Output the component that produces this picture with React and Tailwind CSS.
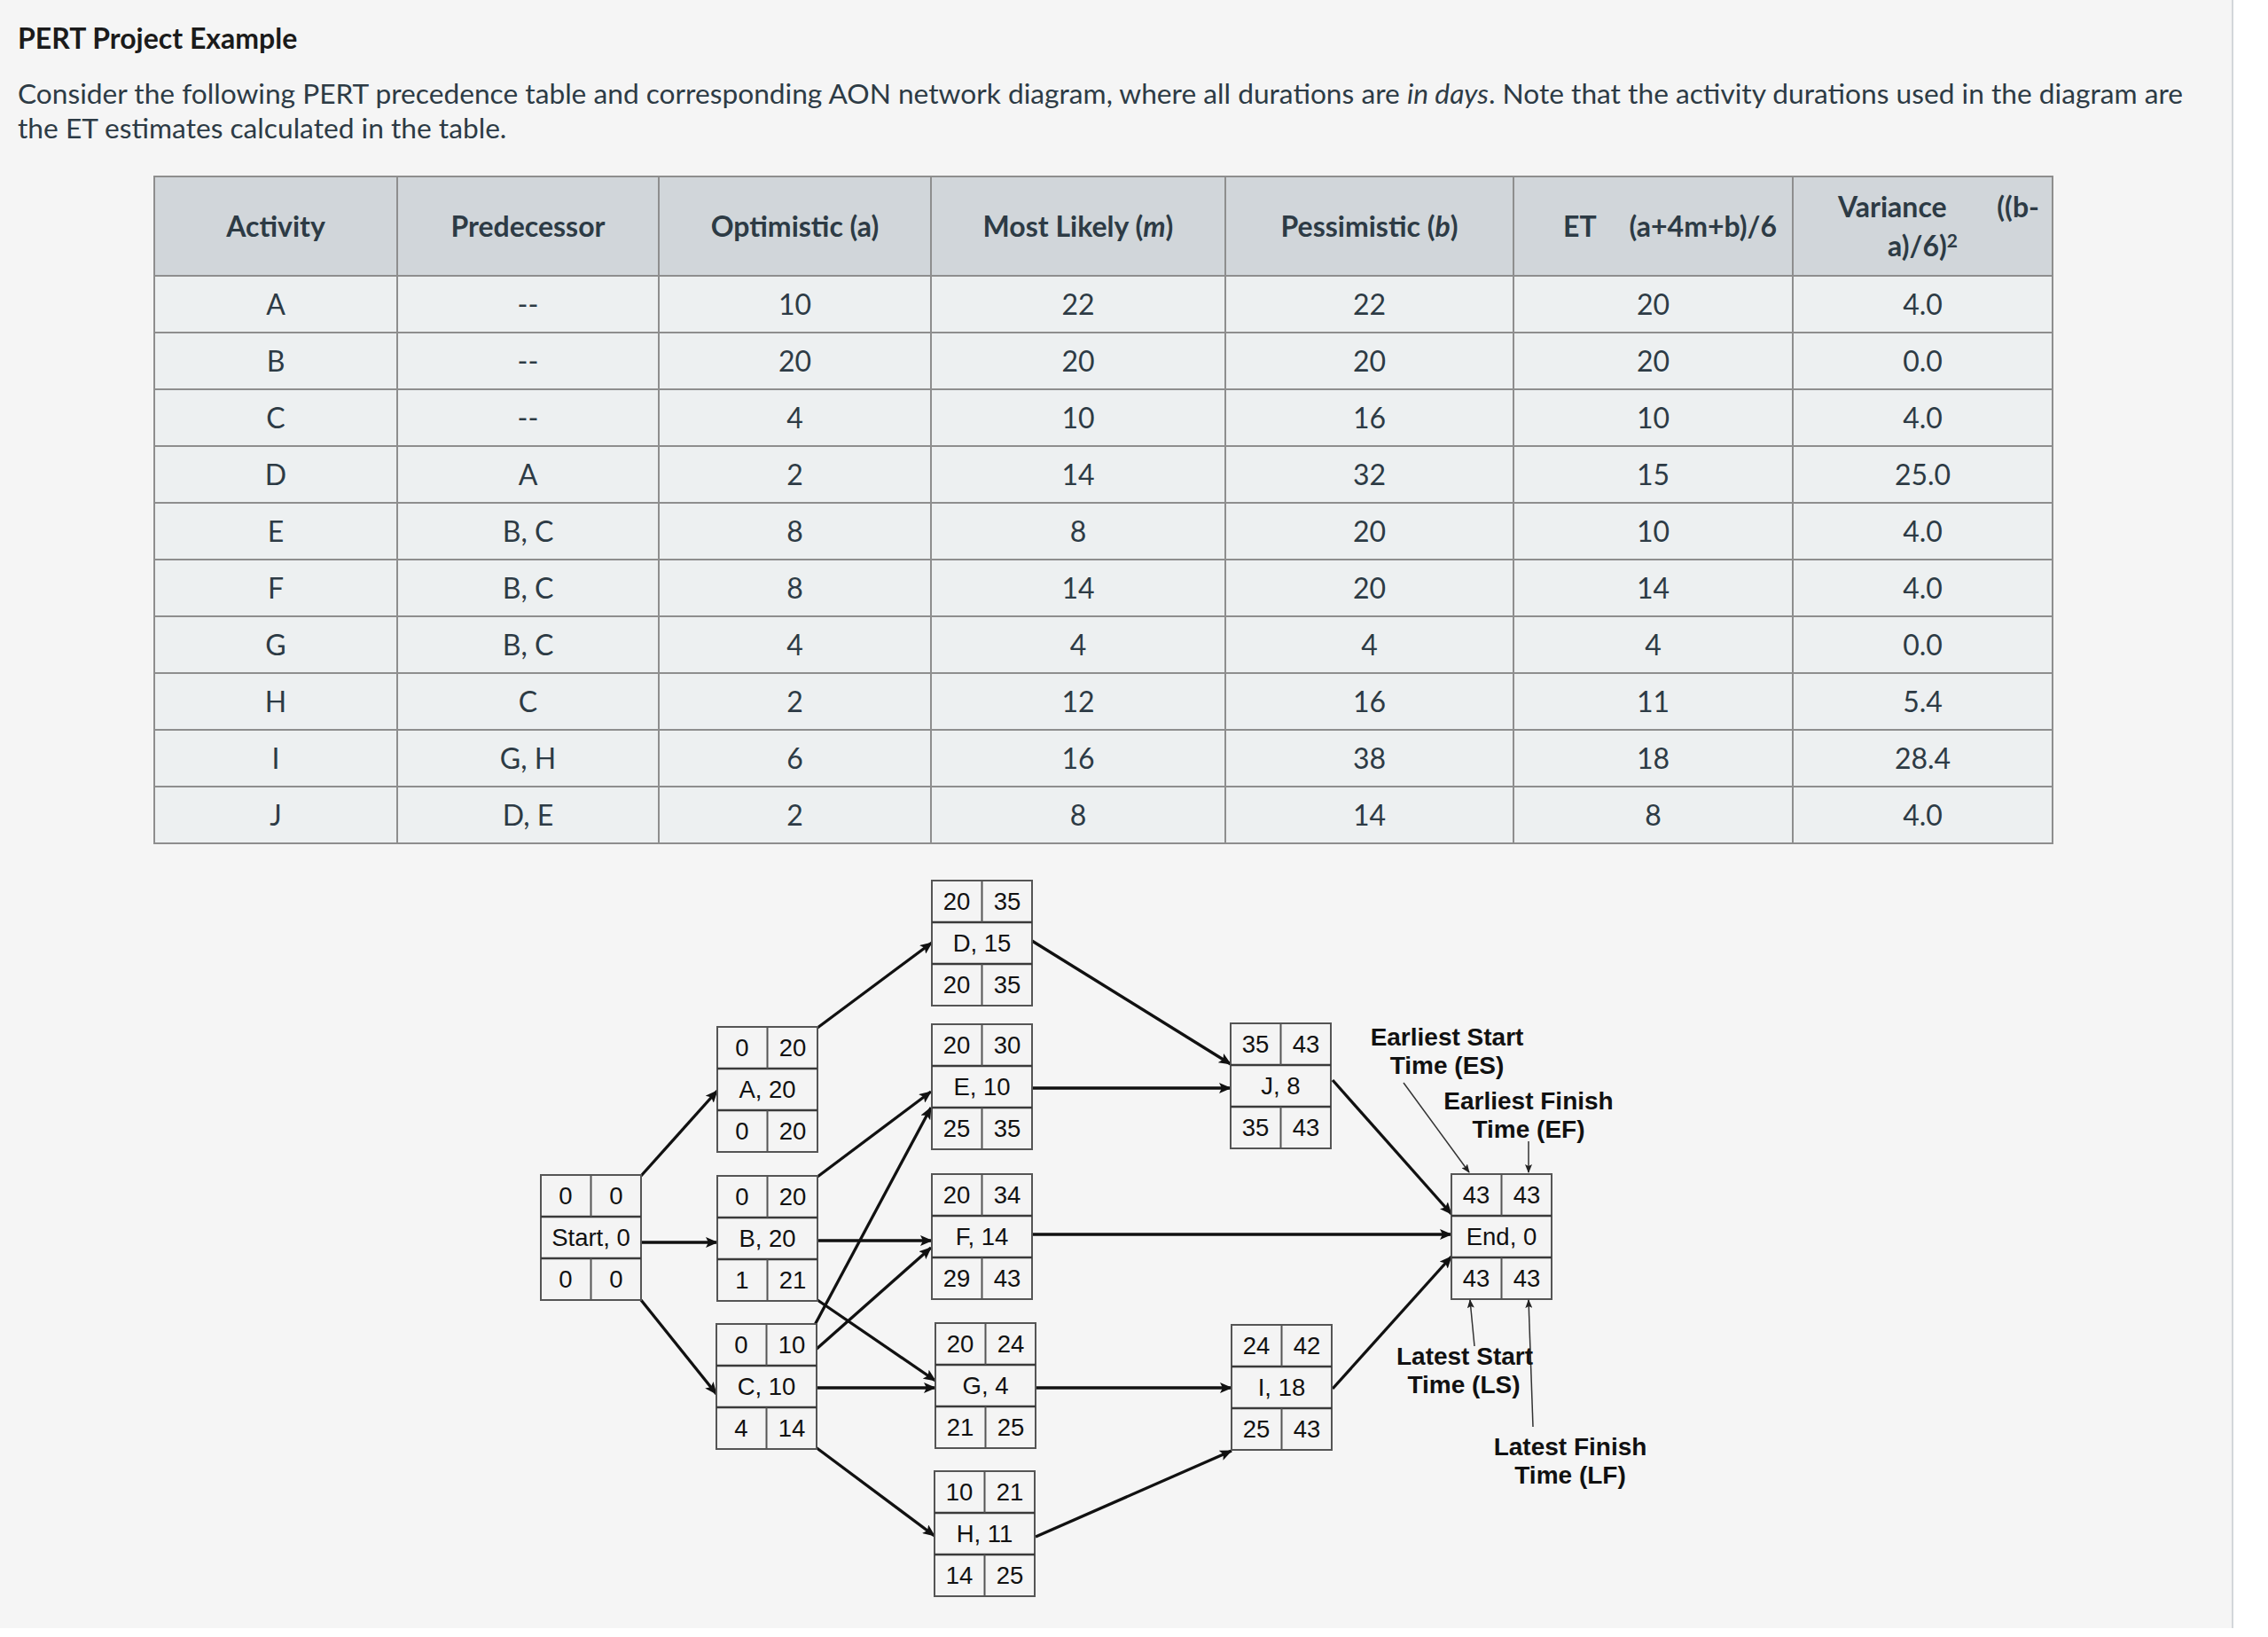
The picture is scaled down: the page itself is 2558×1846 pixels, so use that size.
import React from 'react';

const rows = [
  ['A', '--', '10', '22', '22', '20', '4.0'],
  ['B', '--', '20', '20', '20', '20', '0.0'],
  ['C', '--', '4', '10', '16', '10', '4.0'],
  ['D', 'A', '2', '14', '32', '15', '25.0'],
  ['E', 'B, C', '8', '8', '20', '10', '4.0'],
  ['F', 'B, C', '8', '14', '20', '14', '4.0'],
  ['G', 'B, C', '4', '4', '4', '4', '0.0'],
  ['H', 'C', '2', '12', '16', '11', '5.4'],
  ['I', 'G, H', '6', '16', '38', '18', '28.4'],
  ['J', 'D, E', '2', '8', '14', '8', '4.0'],
];

const colWidths = ['w-[274px]', 'w-[295px]', 'w-[307px]', 'w-[332px]', 'w-[325px]', 'w-[315px]', 'w-[293px]'];

// nodes of the AON diagram: top-left corner in page coordinates
const nodes = [
  { x: 610, y: 1326, es: '0', ef: '0', label: 'Start, 0', ls: '0', lf: '0' },
  { x: 809, y: 1159, es: '0', ef: '20', label: 'A, 20', ls: '0', lf: '20' },
  { x: 809, y: 1327, es: '0', ef: '20', label: 'B, 20', ls: '1', lf: '21' },
  { x: 808, y: 1494, es: '0', ef: '10', label: 'C, 10', ls: '4', lf: '14' },
  { x: 1051, y: 994, es: '20', ef: '35', label: 'D, 15', ls: '20', lf: '35' },
  { x: 1051, y: 1156, es: '20', ef: '30', label: 'E, 10', ls: '25', lf: '35' },
  { x: 1051, y: 1325, es: '20', ef: '34', label: 'F, 14', ls: '29', lf: '43' },
  { x: 1055, y: 1493, es: '20', ef: '24', label: 'G, 4', ls: '21', lf: '25' },
  { x: 1054, y: 1660, es: '10', ef: '21', label: 'H, 11', ls: '14', lf: '25' },
  { x: 1388, y: 1155, es: '35', ef: '43', label: 'J, 8', ls: '35', lf: '43' },
  { x: 1389, y: 1495, es: '24', ef: '42', label: 'I, 18', ls: '25', lf: '43' },
  { x: 1637, y: 1325, es: '43', ef: '43', label: 'End, 0', ls: '43', lf: '43' },
];

const arrows = [
  [723, 1327, 809, 1231],
  [723, 1402, 809, 1402],
  [723, 1467, 808, 1573],
  [922, 1160, 1051, 1064],
  [922, 1328, 1050, 1232],
  [919, 1495, 1050, 1250],
  [922, 1400, 1051, 1400],
  [920, 1523, 1050, 1408],
  [922, 1467, 1055, 1558],
  [920, 1566, 1055, 1566],
  [920, 1633, 1054, 1733],
  [1164, 1062, 1388, 1201],
  [1163, 1228, 1388, 1228],
  [1163, 1393, 1637, 1393],
  [1168, 1566, 1389, 1566],
  [1168, 1734, 1389, 1637],
  [1503, 1219, 1637, 1370],
  [1503, 1567, 1637, 1418],
];

const pointers = [
  [1583, 1222, 1657, 1323],
  [1724, 1288, 1724, 1323],
  [1663, 1519, 1658, 1467],
  [1729, 1610, 1724, 1467],
];

const labels = [
  ['Earliest Start', 1632, 1180],
  ['Time (ES)', 1632, 1212],
  ['Earliest Finish', 1724, 1252],
  ['Time (EF)', 1724, 1284],
  ['Latest Start', 1652, 1540],
  ['Time (LS)', 1651, 1572],
  ['Latest Finish', 1771, 1642],
  ['Time (LF)', 1771, 1674],
];

const Node = ({ n }) => {
  const w = 113;
  const r = 47;
  return (
    <g>
      <rect x={n.x} y={n.y} width={w} height={r * 3} fill="#f4f4f4" stroke="#555" strokeWidth="2" />
      <line x1={n.x} y1={n.y + r} x2={n.x + w} y2={n.y + r} stroke="#3a3a3a" strokeWidth="2.5" />
      <line x1={n.x} y1={n.y + r * 2} x2={n.x + w} y2={n.y + r * 2} stroke="#3a3a3a" strokeWidth="2.5" />
      <line x1={n.x + w / 2} y1={n.y} x2={n.x + w / 2} y2={n.y + r} stroke="#555" strokeWidth="2" />
      <line x1={n.x + w / 2} y1={n.y + r * 2} x2={n.x + w / 2} y2={n.y + r * 3} stroke="#555" strokeWidth="2" />
      <text x={n.x + 28} y={n.y + 33} textAnchor="middle">{n.es}</text>
      <text x={n.x + 85} y={n.y + 33} textAnchor="middle">{n.ef}</text>
      <text x={n.x + w / 2} y={n.y + r + 33} textAnchor="middle">{n.label}</text>
      <text x={n.x + 28} y={n.y + r * 2 + 33} textAnchor="middle">{n.ls}</text>
      <text x={n.x + 85} y={n.y + r * 2 + 33} textAnchor="middle">{n.lf}</text>
    </g>
  );
};

const Diagram = () => (
  <svg
    width="1300"
    height="860"
    viewBox="580 960 1300 860"
    className="block ml-[560px] mt-[7px]"
    fontFamily="'Liberation Sans', Arial, sans-serif"
    fontSize="27.5"
    fill="#111"
  >
    <defs>
      <marker id="head" markerUnits="userSpaceOnUse" markerWidth="14" markerHeight="12" refX="13" refY="6" orient="auto">
        <path d="M0,0 L14,6 L0,12 L3,6 Z" fill="#111" />
      </marker>
      <marker id="tip" markerUnits="userSpaceOnUse" markerWidth="10" markerHeight="8" refX="9" refY="4" orient="auto">
        <path d="M0,0 L10,4 L0,8 L2,4 Z" fill="#222" />
      </marker>
    </defs>
    {arrows.map(([x1, y1, x2, y2], i) => (
      <line key={i} x1={x1} y1={y1} x2={x2} y2={y2} stroke="#111" strokeWidth="3.3" markerEnd="url(#head)" />
    ))}
    {nodes.map((n, i) => (
      <Node key={i} n={n} />
    ))}
    {pointers.map(([x1, y1, x2, y2], i) => (
      <line key={i} x1={x1} y1={y1} x2={x2} y2={y2} stroke="#333" strokeWidth="1.5" markerEnd="url(#tip)" />
    ))}
    {labels.map(([t, x, y], i) => (
      <text key={i} x={x} y={y} textAnchor="middle" fontWeight="bold" fontSize="28">
        {t}
      </text>
    ))}
  </svg>
);

export default function App() {
  return (
    <div className="min-h-[1846px] w-full bg-white">
      <div className="w-[2519px] h-[1836px] bg-[#f5f5f5] border-r-2 border-[#d3d7da] pl-[20px] pt-[24px] font-['Lato',sans-serif]">
        <h2 className="text-[32px] leading-[38px] font-bold text-[#1b1b1b]">PERT Project Example</h2>
        <p className="mt-[24px] w-[2497px] text-[31.7px] leading-[39px] text-[#2d3b45]">
          Consider the following PERT precedence table and corresponding AON network diagram, where all durations are <em>in days</em>. Note that the activity durations used in the diagram are
          <br />
          the ET estimates calculated in the table.
        </p>

        <table className="mt-[34px] ml-[153px] w-[2141px] table-fixed border-collapse text-[#2d3b45]">
          <colgroup>
            {colWidths.map((w, i) => (
              <col key={i} className={w} />
            ))}
          </colgroup>
          <thead>
            <tr className="h-[112px] bg-[#d1d6da] text-[32px] font-bold">
              <th className="border-2 border-[#8e8e8e] text-center">Activity</th>
              <th className="border-2 border-[#8e8e8e] text-center">Predecessor</th>
              <th className="border-2 border-[#8e8e8e] text-center">Optimistic (a)</th>
              <th className="border-2 border-[#8e8e8e] text-center">
                Most Likely (<em>m</em>)
              </th>
              <th className="border-2 border-[#8e8e8e] text-center">
                Pessimistic (<em>b</em>)
              </th>
              <th className="border-2 border-[#8e8e8e] text-center pl-[38px] whitespace-nowrap">
                ET<span className="inline-block w-[37px]"></span>(a+4m+b)/6
              </th>
              <th className="border-2 border-[#8e8e8e] text-center leading-[44px]">
                <div className="flex justify-between pl-[50px] pr-[14px]">
                  <span>Variance</span>
                  <span>((b-</span>
                </div>
                <div>
                  a)/6)<sup className="text-[21px]">2</sup>
                </div>
              </th>
            </tr>
          </thead>
          <tbody>
            {rows.map((r) => (
              <tr key={r[0]} className="h-[64px] bg-[#edf0f1] text-[32px]">
                {r.map((c, i) => (
                  <td key={i} className="border-2 border-[#8e8e8e] text-center">
                    {c}
                  </td>
                ))}
              </tr>
            ))}
          </tbody>
        </table>

        <Diagram />
      </div>
    </div>
  );
}
